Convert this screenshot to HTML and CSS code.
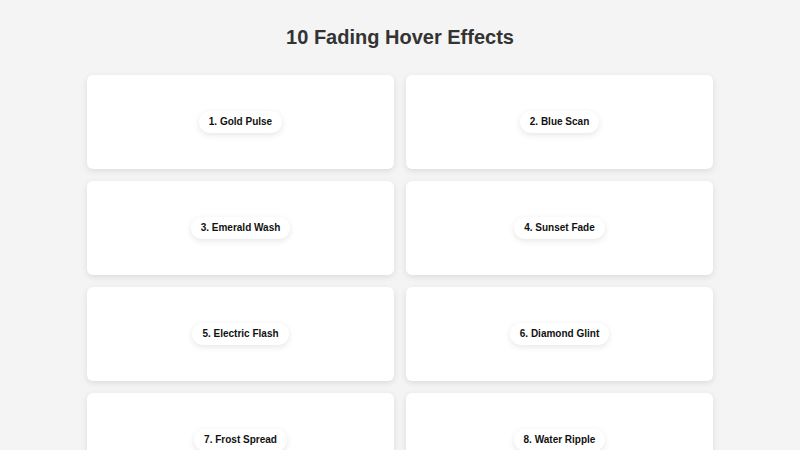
FILE: index.html
```html
<!DOCTYPE html>
<html lang="en">
<head>
<meta charset="utf-8">
<title>10 Fading Hover Effects</title>
<link rel="stylesheet" href="styles.css">
</head>
<body>
  <h1 class="title">10 Fading Hover Effects</h1>
  <div class="grid">
    <div class="card"><span class="label">1. Gold Pulse</span></div>
    <div class="card"><span class="label">2. Blue Scan</span></div>
    <div class="card"><span class="label">3. Emerald Wash</span></div>
    <div class="card"><span class="label">4. Sunset Fade</span></div>
    <div class="card"><span class="label">5. Electric Flash</span></div>
    <div class="card"><span class="label">6. Diamond Glint</span></div>
    <div class="card"><span class="label">7. Frost Spread</span></div>
    <div class="card"><span class="label">8. Water Ripple</span></div>
    <div class="card"><span class="label">9. Neon Glow</span></div>
    <div class="card"><span class="label">10. Shadow Fade</span></div>
  </div>
</body>
</html>
```
FILE: styles.css
```css
* { box-sizing: border-box; }

body {
  margin: 0;
  padding: 25px 20px 40px;
  background: #f4f4f4;
  font-family: "Liberation Sans", Arial, sans-serif;
  color: #333;
}

.title {
  margin: 0 0 25px;
  font-size: 20px;
  line-height: 25px;
  font-weight: 700;
  text-align: center;
  color: #333;
}

.grid {
  max-width: 626px;
  margin: 0 auto;
  display: grid;
  grid-template-columns: 1fr 1fr;
  gap: 12px;
}

.card {
  height: 94px;
  background: #fff;
  border-radius: 6px;
  box-shadow: 0 2px 6px rgba(0, 0, 0, 0.1);
  display: flex;
  align-items: center;
  justify-content: center;
}

.label {
  padding: 5px 10px;
  background: #fff;
  border-radius: 20px;
  box-shadow: 0 2px 6px rgba(0, 0, 0, 0.1);
  font-size: 10px;
  line-height: 12px;
  font-weight: 700;
  color: #111;
}
```
